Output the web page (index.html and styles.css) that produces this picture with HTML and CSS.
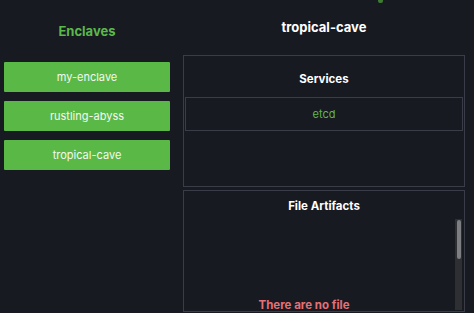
FILE: index.html
```html
<!DOCTYPE html>
<html lang="en">
<head>
    <meta charset="UTF-8">
    <meta name="viewport" content="width=device-width, initial-scale=1.0">
    <title>Enclaves</title>
    <link rel="stylesheet" href="styles.css">
</head>
<body>
    <div class="top-mark"></div>
    <div class="app">
        <div class="sidebar">
            <h2 class="sidebar-title">Enclaves</h2>
            <div class="enclave-list">
                <button class="enclave-btn">my-enclave</button>
                <button class="enclave-btn">rustling-abyss</button>
                <button class="enclave-btn">tropical-cave</button>
            </div>
        </div>

        <div class="main">
            <h2 class="main-title">tropical-cave</h2>

            <div class="panel services">
                <h3 class="panel-title">Services</h3>
                <div class="service-item">etcd</div>
            </div>

            <div class="panel artifacts">
                <h3 class="panel-title small">File Artifacts</h3>
                <div class="scroll-area">
                    <div class="scroll-content">
                        <p class="empty">There are no file</p>
                    </div>
                    <div class="scrollbar"><div class="thumb"></div></div>
                </div>
            </div>
        </div>
    </div>
</body>
</html>
```

FILE: styles.css
```css
body {
    margin: 0;
    height: 313px;
    overflow: hidden;
    background-color: #181a22;
    color: #fff;
    font-family: Inter, 'Liberation Sans', sans-serif;
}

.top-mark {
    width: 5px;
    height: 3px;
    margin-left: 378px;
    margin-bottom: -3px;
    background-color: #3f7a34;
    border-radius: 0 0 2px 2px;
}

.app {
    display: grid;
    grid-template-columns: 166px 282px;
    column-gap: 13px;
    padding-left: 4px;
}

.sidebar-title {
    margin: 0;
    height: 62px;
    line-height: 62px;
    text-align: center;
    font-size: 13px;
    font-weight: 700;
    color: #5bb84a;
}

.enclave-list {
    display: flex;
    flex-direction: column;
    gap: 9px;
}

.enclave-btn {
    height: 30px;
    border: none;
    border-radius: 1px;
    background-color: #5ab847;
    color: #f4f8f2;
    font-family: inherit;
    font-size: 11px;
}

.main-title {
    margin: 0;
    height: 55px;
    line-height: 55px;
    text-align: center;
    font-size: 13px;
    font-weight: 700;
}

.panel {
    border: 1px solid #3a3d47;
    padding: 0 1px;
}

.services {
    height: 130px;
    margin-bottom: 3px;
}

.panel-title {
    margin: 0;
    padding-top: 5px;
    height: 36px;
    line-height: 36px;
    text-align: center;
    font-size: 11.5px;
    font-weight: 700;
}

.panel-title.small {
    padding-top: 2px;
    height: 26px;
    line-height: 26px;
}

.service-item {
    height: 32px;
    line-height: 32px;
    border: 1px solid #3a3d47;
    text-align: center;
    font-size: 11px;
    color: #62b54f;
}

.artifacts {
    height: 120px;
}

.scroll-area {
    display: flex;
    height: 91px;
}

.scroll-content {
    flex: 1;
    padding-right: 32px;
}

.empty {
    margin: 79px 0 0;
    text-align: center;
    font-size: 11.5px;
    font-weight: 700;
    color: #e37077;
}

.scrollbar {
    width: 7px;
    margin-right: 1px;
    background-color: #2e2f33;
}

.thumb {
    width: 4px;
    height: 39px;
    margin: 1px auto 0;
    border-radius: 2px;
    background-color: #7d7e82;
}
```
